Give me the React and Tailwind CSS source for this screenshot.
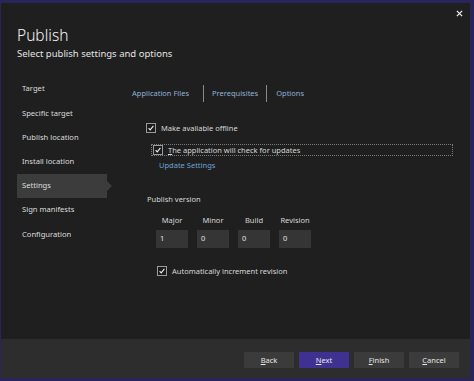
import React from "react";

const navItems = [
  "Target",
  "Specific target",
  "Publish location",
  "Install location",
  "Settings",
  "Sign manifests",
  "Configuration",
];

function Check({ label, className = "" }) {
  return (
    <div className={`flex items-center gap-[5px] ${className}`}>
      <span className="flex h-[10px] w-[10px] items-center justify-center border border-[#9a9a9a] bg-[#1b1b1b]">
        <svg viewBox="0 0 10 10" className="h-[8px] w-[8px]">
          <path d="M2 5.2 L4 7.4 L8 2.4" fill="none" stroke="#f2f2f2" strokeWidth="1.3" />
        </svg>
      </span>
      <span className="leading-[14px]">{label}</span>
    </div>
  );
}

function FooterButton({ accel, rest, primary }) {
  return (
    <button
      className={`h-[16px] w-[50px] text-[7.5px] leading-[16px] text-[#e6e6e6] ${
        primary ? "bg-[#3f3192]" : "bg-[#3b3b3b]"
      }`}
    >
      <span className="underline underline-offset-1">{accel}</span>
      {rest}
    </button>
  );
}

export default function App() {
  const versions = [
    { label: "Major", value: "1" },
    { label: "Minor", value: "0" },
    { label: "Build", value: "0" },
    { label: "Revision", value: "0" },
  ];

  return (
    <div
      className="h-[381px] w-[474px] bg-[#29255a] pb-[3px] pl-[1px] pr-[4px] pt-[3px]"
      style={{ fontFamily: '"Noto Sans", sans-serif' }}
    >
      <div className="flex h-full flex-col bg-[#1f1f1f] text-[#d8d8d8]">
        {/* Header */}
        <div className="relative pl-4 pt-5">
          <h1 className="text-[15.5px] font-light leading-6 text-[#f2f2f2]">Publish</h1>
          <p className="text-[9.5px] leading-[14px] text-[#e4e4e4]">
            Select publish settings and options
          </p>
          <button className="absolute right-[7px] top-[7px]">
            <svg viewBox="0 0 8 8" className="h-[7px] w-[7px]">
              <path d="M1 1 L7 7 M7 1 L1 7" stroke="#f0f0f0" strokeWidth="1.4" />
            </svg>
          </button>
        </div>

        {/* Body */}
        <div className="mt-[16px] flex flex-1">
          {/* Nav */}
          <div className="ml-4 flex w-[96px] flex-col">
            {navItems.map((item) => (
              <div key={item} className="relative flex h-[24.2px] w-[90px] items-center">
                {item === "Settings" && (
                  <>
                    <div className="absolute inset-0 bg-[#3c3c3c]" />
                    <div className="absolute right-[-5px] top-[7px] h-0 w-0 border-y-[5px] border-l-[5px] border-y-transparent border-l-[#3c3c3c]" />
                  </>
                )}
                <span className="relative pl-[5px] text-[7.6px] text-[#dcdcdc]">{item}</span>
              </div>
            ))}
          </div>

          {/* Content */}
          <div className="flex flex-col pl-[19px] text-[7.5px]">
            <div className="mt-[8px] flex h-[17px] items-center text-[#8fb3d6]">
              <span>Application Files</span>
              <span className="ml-[14px] h-[17px] w-px bg-[#8a8a8a]" />
              <span className="ml-[8px]">Prerequisites</span>
              <span className="ml-[8px] h-[17px] w-px bg-[#8a8a8a]" />
              <span className="ml-[9px]">Options</span>
            </div>

            <Check label="Make available offline" className="ml-[14px] mt-[19px]" />

            <div className="ml-[19px] mt-[9px] flex h-[12px] w-[302px] items-center border border-dotted border-[#7a7a7a] pl-[1px]">
              <Check
                label={
                  <>
                    <span className="underline underline-offset-1">T</span>he application will check for updates
                  </>
                }
              />
            </div>

            <span className="ml-[27px] mt-[3px] leading-[12px] text-[#6ea3d8]">Update Settings</span>

            <span className="ml-[15px] mt-[22px] leading-[12px]">Publish version</span>

            <div className="ml-[24px] mt-[9px] grid grid-cols-[32px_32px_32px_32px] gap-x-[9px]">
              {versions.map((v) => (
                <span key={v.label} className="text-center leading-[12px]">
                  {v.label}
                </span>
              ))}
              {versions.map((v) => (
                <div
                  key={v.label + "-input"}
                  className="mt-[4px] flex h-[18px] items-center bg-[#353535] pl-[4px] text-[#e2e2e2]"
                >
                  {v.value}
                </div>
              ))}
            </div>

            <Check label="Automatically increment revision" className="ml-[25px] mt-[16px]" />
          </div>
        </div>

        {/* Footer */}
        <div className="flex h-[39px] justify-end gap-[5px] bg-[#2d2d2d] pr-[11px] pt-[13px]">
          <FooterButton accel="B" rest="ack" />
          <FooterButton accel="N" rest="ext" primary />
          <FooterButton accel="F" rest="inish" />
          <FooterButton accel="C" rest="ancel" />
        </div>
      </div>
    </div>
  );
}
